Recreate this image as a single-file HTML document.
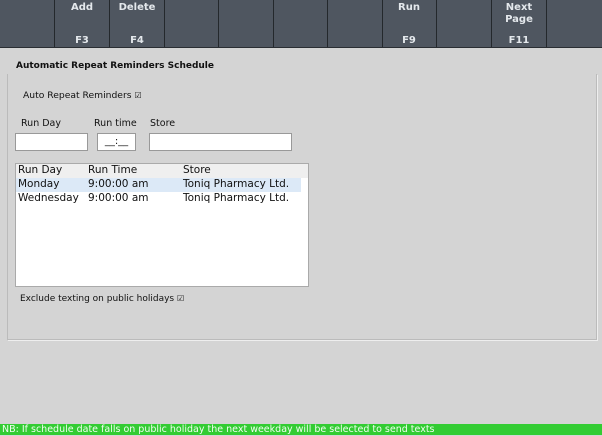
<!DOCTYPE html>
<html><head><style>
body{margin:0;width:602px;height:435px;background:#d4d4d4;font-family:"DejaVu Sans","Liberation Sans",sans-serif;font-size:10px;color:#111;position:relative;overflow:hidden}
.tb{position:absolute;left:0;top:0;width:602px;height:47px;background:#4f5660;border-bottom:1px solid #2a2e33}
.b{position:absolute;top:0;height:47px;width:54px;border-right:1px solid #24282c;color:#e4e8ec;font-weight:bold;font-size:10px;text-align:center}
.b .t{position:absolute;top:2px;left:0;right:0;line-height:12px}
.b .f{position:absolute;top:35px;left:0;right:0}
.a{position:absolute;white-space:nowrap}
.in{position:absolute;background:#fff;border:1px solid #999;height:16px}
.l{font-size:10.5px}
</style></head><body>
<div class="tb">
<div class="b" style="left:0"></div>
<div class="b" style="left:55px"><div class="t">Add</div><div class="f">F3</div></div>
<div class="b" style="left:110px"><div class="t">Delete</div><div class="f">F4</div></div>
<div class="b" style="left:164px"></div>
<div class="b" style="left:219px"></div>
<div class="b" style="left:273px"></div>
<div class="b" style="left:328px"></div>
<div class="b" style="left:382px"><div class="t">Run</div><div class="f">F9</div></div>
<div class="b" style="left:437px"></div>
<div class="b" style="left:492px"><div class="t">Next<br>Page</div><div class="f">F11</div></div>
<div class="b" style="left:547px;border-right:none"></div>
</div>
<div style="position:absolute;left:7px;top:74px;width:588px;height:265px;border-left:1px solid #bbb;border-right:1px solid #bbb;border-bottom:1px solid #bbb;box-shadow:1px 1px 0 #eee"></div>
<div class="a" style="left:16px;top:61px;font-weight:bold;font-size:9px">Automatic Repeat Reminders Schedule</div>
<div class="a" style="left:23px;top:90px;font-size:9.2px">Auto Repeat Reminders <span style="font-size:8px">☑</span></div>
<div class="a" style="left:21px;top:118px;font-size:9.5px">Run Day</div>
<div class="a" style="left:94px;top:118px;font-size:9.5px">Run time</div>
<div class="a" style="left:150px;top:118px;font-size:9.5px">Store</div>
<div class="in" style="left:15px;top:133px;width:71px"></div>
<div class="in" style="left:97px;top:133px;width:37px;font-size:10px;text-align:center;line-height:16px">__:__</div>
<div class="in" style="left:149px;top:133px;width:141px"></div>
<div class="in l" style="left:15px;top:163px;width:292px;height:122px;border-color:#aaa">
<div style="position:absolute;left:0;top:0;width:292px;height:14px;background:#efefef"></div>
<div style="position:absolute;left:0;top:14px;width:285px;height:14px;background:#dce9f7"></div>
<div class="a" style="left:2px;top:0px">Run Day</div><div class="a" style="left:72px;top:0px">Run Time</div><div class="a" style="left:167px;top:0px">Store</div>
<div class="a" style="left:2px;top:14px">Monday</div><div class="a" style="left:72px;top:14px">9:00:00 am</div><div class="a" style="left:167px;top:14px">Toniq Pharmacy Ltd.</div>
<div class="a" style="left:2px;top:28px">Wednesday</div><div class="a" style="left:72px;top:28px">9:00:00 am</div><div class="a" style="left:167px;top:28px">Toniq Pharmacy Ltd.</div>
</div>
<div class="a" style="left:20px;top:294px;font-size:9px">Exclude texting on public holidays <span style="font-size:8px">☑</span></div>
<div style="position:absolute;left:0;top:424px;width:602px;height:11px;background:#33cc33;color:#f0fff0;font-size:9.5px;line-height:12px;padding-left:2px;white-space:nowrap">NB: If schedule date falls on public holiday the next weekday will be selected to send texts</div>
</body></html>
